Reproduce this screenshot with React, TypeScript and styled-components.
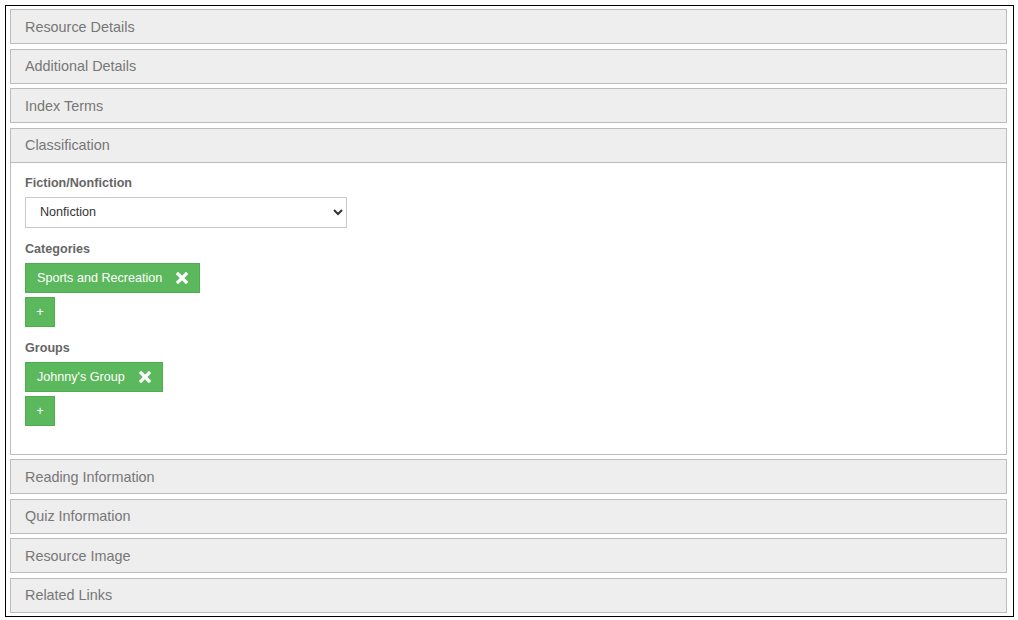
import React from "react";
import styled, { createGlobalStyle } from "styled-components";

const Global = createGlobalStyle`
  html, body { margin: 0; padding: 0; background: #fff; }
  body { font-family: "Liberation Sans", Arial, sans-serif; }
  * { box-sizing: border-box; }
`;

const Frame = styled.div`
  margin: 5px 0 0 5px;
  width: 1009px;
  border: 1px solid #000;
  padding: 3px 6px 3px 4px;
  display: flex;
  flex-direction: column;
  gap: 4.5px;
`;

const Panel = styled.section`
  border: 1px solid #bcbcbc;
  background: #fff;
`;

const Heading = styled.div<{ $open?: boolean }>`
  height: ${(p) => (p.$open ? "34px" : "33px")};
  padding: 0 14px;
  display: flex;
  align-items: center;
  background: #eeeeee;
  color: #777;
  font-size: 14.4px;
  border-bottom: ${(p) => (p.$open ? "1px solid #bcbcbc" : "none")};
`;

const Body = styled.div`
  padding: 13px 14px 28px;
  display: flex;
  flex-direction: column;
`;

const Label = styled.div<{ $top?: number }>`
  font-size: 12.6px;
  line-height: 15px;
  font-weight: bold;
  color: #666;
  margin-top: ${(p) => p.$top ?? 0}px;
  margin-bottom: 6px;
`;

const Select = styled.select`
  width: 322px;
  height: 31px;
  border: 1px solid #c8c8c8;
  border-radius: 0;
  background: #fff;
  padding: 0 10px;
  font-family: "Liberation Sans", Arial, sans-serif;
  font-size: 12.6px;
  color: #333;
`;

const Stack = styled.div`
  display: flex;
  flex-direction: column;
  align-items: flex-start;
  gap: 4px;
`;

const GreenButton = styled.div<{ $square?: boolean }>`
  height: 30px;
  ${(p) => (p.$square ? "width: 30px; justify-content: center;" : "padding: 0 11px 0 11px; gap: 14px;")}
  display: flex;
  align-items: center;
  background: #5cb85c;
  border: 1px solid #4cae4c;
  color: #fff;
  font-size: 12.6px;
`;

const Plus = styled.span`
  font-size: 13px;
  line-height: 1;
`;

const Remove = () => (
  <svg width="12" height="12" viewBox="0 0 12 12" aria-hidden>
    <path d="M2 2 L10 10 M10 2 L2 10" stroke="#fff" strokeWidth="3.2" strokeLinecap="square" />
  </svg>
);

const collapsedBefore = ["Resource Details", "Additional Details", "Index Terms"];
const collapsedAfter = ["Reading Information", "Quiz Information", "Resource Image", "Related Links"];

export default function App() {
  return (
    <>
      <Global />
      <Frame>
        {collapsedBefore.map((t) => (
          <Panel key={t}>
            <Heading>{t}</Heading>
          </Panel>
        ))}
        <Panel>
          <Heading $open>Classification</Heading>
          <Body>
            <Label>Fiction/Nonfiction</Label>
            <Select defaultValue="Nonfiction">
              <option>Fiction</option>
              <option>Nonfiction</option>
            </Select>
            <Label $top={14}>Categories</Label>
            <Stack>
              <GreenButton>
                <span>Sports and Recreation</span>
                <Remove />
              </GreenButton>
              <GreenButton $square>
                <Plus>+</Plus>
              </GreenButton>
            </Stack>
            <Label $top={14}>Groups</Label>
            <Stack>
              <GreenButton>
                <span>Johnny's Group</span>
                <Remove />
              </GreenButton>
              <GreenButton $square>
                <Plus>+</Plus>
              </GreenButton>
            </Stack>
          </Body>
        </Panel>
        {collapsedAfter.map((t) => (
          <Panel key={t}>
            <Heading>{t}</Heading>
          </Panel>
        ))}
      </Frame>
    </>
  );
}
